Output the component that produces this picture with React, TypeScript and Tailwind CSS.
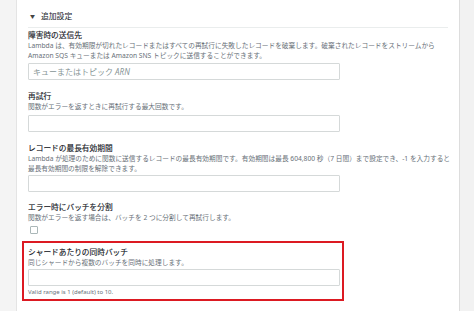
const font = { fontFamily: '"Noto Sans", "Noto Sans CJK JP", sans-serif' };

const Label = ({ children }: { children: React.ReactNode }) => (
  <div className="h-[11px] text-[7.7px] leading-[11px] font-normal text-[#16191f] whitespace-nowrap [-webkit-text-stroke:0.15px_#16191f]">
    {children}
  </div>
);

const Desc = ({ lines }: { lines: string[] }) => (
  <div className="text-[6.7px] leading-[10px] text-[#687078] whitespace-nowrap">
    {lines.map((l) => (
      <div key={l} className="h-[10px]">{l}</div>
    ))}
  </div>
);

const Input = ({ placeholder, className = '' }: { placeholder?: React.ReactNode; className?: string }) => (
  <div
    className={`h-[17px] w-[312px] border border-[#d5d9d9] rounded-[1px] bg-white flex items-center px-[4px] text-[8px] text-[#879596] ${className}`}
  >
    {placeholder}
  </div>
);

export default function App() {
  return (
    <div className="flex w-[474px] h-[311px] overflow-hidden bg-white" style={font}>
      {/* left rail */}
      <div className="w-[17px] shrink-0 bg-[#f4f4f4] border-r border-[#e4e4e4]" />

      {/* panel */}
      <div className="w-[442px] shrink-0 pt-[11px] px-[11px]">
        <div className="h-[12px] flex items-center text-[7.8px] text-[#16191f]">
          <span className="ml-[2px] mr-[6px] text-[5px] text-[#444]">▼</span>
          追加設定
        </div>
        <div className="mt-[4px] h-px bg-[#eaeded]" />

        {/* 障害時の送信先 */}
        <div className="mt-[2px]">
          <Label>障害時の送信先</Label>
          <Desc
            lines={[
              'Lambda は、有効期限が切れたレコードまたはすべての再試行に失敗したレコードを破棄します。破棄されたレコードをストリームから',
              'Amazon SQS キューまたは Amazon SNS トピックに送信することができます。',
            ]}
          />
          <Input
            className="mt-[2px]"
            placeholder={
              <span>
                キューまたはトピック <i>ARN</i>
              </span>
            }
          />
        </div>

        {/* 再試行 */}
        <div className="mt-[11px]">
          <Label>再試行</Label>
          <Desc lines={['関数がエラーを返すときに再試行する最大回数です。']} />
          <Input className="mt-[3px]" />
        </div>

        {/* レコードの最長有効期間 */}
        <div className="mt-[11px]">
          <Label>レコードの最長有効期間</Label>
          <Desc
            lines={[
              'Lambda が処理のために関数に送信するレコードの最長有効期間です。有効期間は最長 604,800 秒（7 日間）まで設定でき、-1 を入力すると',
              '最長有効期間の制限を解除できます。',
            ]}
          />
          <Input className="mt-[1px]" />
        </div>

        {/* エラー時にバッチを分割 */}
        <div className="mt-[10px]">
          <Label>エラー時にバッチを分割</Label>
          <Desc lines={['関数がエラーを返す場合は、バッチを 2 つに分割して再試行します。']} />
          <div className="mt-[3px] ml-[2px] w-[8px] h-[8px] border border-[#aab7b8] rounded-[1px] bg-white" />
        </div>

        {/* シャードあたりの同時バッチ (highlighted) */}
        <div className="mt-[7px] -ml-[6px] w-[322px] border-2 border-[#dc1a22] pt-[4px] pb-[2px] pl-[4px] pr-[2px]">
          <Label>シャードあたりの同時バッチ</Label>
          <Desc lines={['同じシャードから複数のバッチを同時に処理します。']} />
          <Input className="mt-[1px]" />
          <div className="mt-[2px] h-[9px] text-[6px] leading-[9px] text-[#687078]">Valid range is 1 (default) to 10.</div>
        </div>
      </div>

      {/* right rail */}
      <div className="flex-1 bg-[#f2f2f2] border-l border-[#dddddd]" />
    </div>
  );
}
